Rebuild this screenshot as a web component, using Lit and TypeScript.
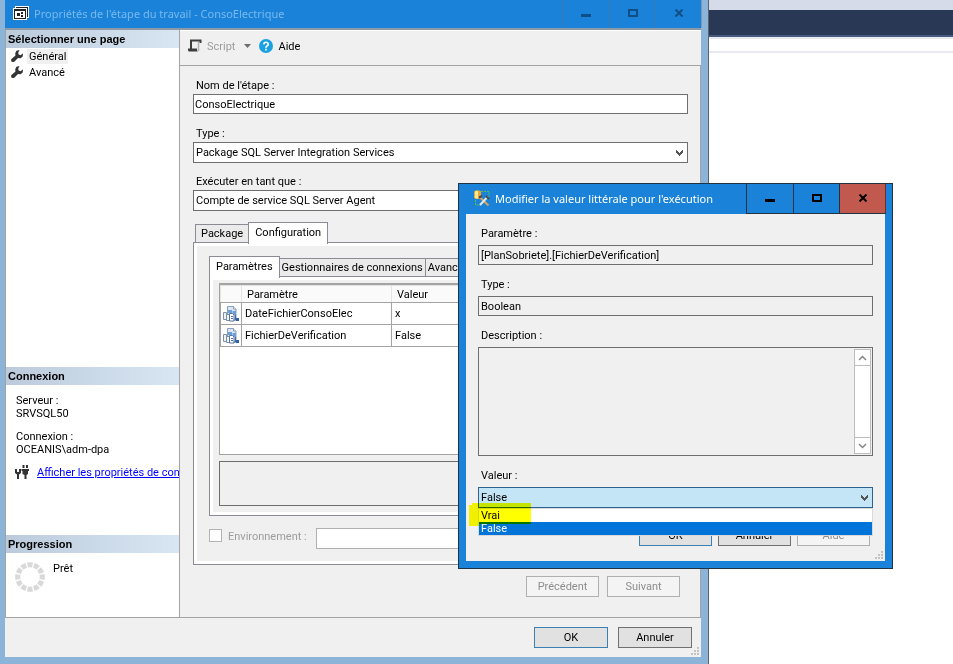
import { LitElement, html, css, svg } from "lit";
import { customElement, property } from "lit/decorators.js";
import { classMap } from "lit/directives/class-map.js";

const chevron = html`<svg class="chevron" width="7" height="6" viewBox="0 0 7 6" shape-rendering="crispEdges" aria-hidden="true">
  <path d="M0 0h1v1h1v1h1v1h1v-1h1v-1h1v-1h1v3h-1v1h-1v1h-1v1h-1v-1h-1v-1h-1v-1h-1z" fill="currentColor" /></svg>`;

const wrench = html`<svg width="12" height="12" viewBox="0 0 12 12" aria-hidden="true">
  <path d="M8.500 0 5.500.8 4.200 3.200l.3 2.200L.2 9.200V11.200L1.500 12H3l4-3.900 2.600.1 2.100-1.700L12 3.200 9.600 5.200 7.600 4.600l-.4-1.900z" fill="#333" /></svg>`;

const grip = html`<svg class="grip" width="8" height="8" viewBox="0 0 8 8" shape-rendering="crispEdges" aria-hidden="true">
  <path d="M6 0h2v2h-2zM3 3h2v2h-2zM6 3h2v2h-2zM0 6h2v2h-2zM3 6h2v2h-2zM6 6h2v2h-2z" fill="#c3c3c3" /></svg>`;

const packageIcon = html`<svg width="16" height="16" viewBox="0 0 16 16" aria-hidden="true">
  <path d="M4.500.5h6l2.500 2.500v9h-8.500z" fill="#dbe6f2" stroke="#8aa0bd" />
  <path d="M10.500.5v2.500h2.500" fill="#fff" stroke="#8aa0bd" />
  <path d="M5 4h4v3h-4zM9.500 5h3.500v4h-3.500z" fill="#6c9fd6" />
  <path d="M.5 6.500h3v7h-3zM3.500 8.500h3v6h-3z" fill="#eef3f9" stroke="#7e8fa8" />
  <path d="M6.500 7.500h3l1.500 1.500v6h-4.500z" fill="#fff" stroke="#5e7596" />
  <path d="M8 10.500h2M8 12.500h2" stroke="#4c79b2" />
  <path d="M12.500 9v5M10.500 14h4.500" stroke="#456a9e" />
  <path d="M13 12h3v3h-3z" fill="#2e66ad" /></svg>`;

const ringSegments = Array.from({ length: 12 }, (_, i) => i * 30);

@customElement("window-controls")
export class WindowControls extends LitElement {
  @property({ type: Boolean, reflect: true }) active = false;

  static styles = css`
    :host { display: flex; flex: none; align-self: stretch; color: #0f4f86; margin-right: -1px; }
    :host([active]) { color: #000; }
    .control {
      box-sizing: border-box; display: grid; place-items: center; width: 47px; margin: 0; padding: 0 0 2px;
      border: 0; border-left: 1px solid #3c79b0; background: none; color: inherit;
    }
    .control:nth-child(2) { width: 46px; }
    .control:last-child { border-right: 1px solid #7c98b4; }
    :host([active]) .control { border: 1px solid #22333f; border-width: 0 0 1px 1px; }
    :host([active]) .close { background: #c2594f; border-right: 1px solid #6b2f2c; }
    svg { display: block; }
  `;

  render() {
    return html`
      <button class="control" aria-label="Réduire">
        <svg width="10" height="8" viewBox="0 0 10 8" shape-rendering="crispEdges"><path d="M0 5h10v3h-10z" fill="currentColor" /></svg>
      </button>
      <button class="control" aria-label="Agrandir">
        <svg width="10" height="8" viewBox="0 0 10 8" shape-rendering="crispEdges"><path d="M1 1h8v6h-8z" fill="none" stroke="currentColor" stroke-width="2" /></svg>
      </button>
      <button class="control close" aria-label="Fermer">
        <svg width="10" height="8" viewBox="0 0 10 8"><path d="M1.500.5 8.500 7.500M8.500.5 1.500 7.500" fill="none" stroke="currentColor" stroke-width="2" /></svg>
      </button>
    `;
  }
}

@customElement("app-root")
export class AppRoot extends LitElement {
  static styles = css`
    * { box-sizing: border-box; }
    :host {
      display: flex; position: relative; min-height: 100vh; overflow: hidden;
      font: 11px/13px Roboto, "Liberation Sans", Arial, sans-serif; color: #000; background: #fff;
    }
    button, input, select, textarea { font: inherit; color: inherit; margin: 0; border-radius: 0; }
    svg { display: block; flex: none; }

    .window {
      flex: 1; min-width: 0; display: flex; flex-direction: column;
      background: #f0f0f0; border: solid #8cb4d8; border-width: 0 7px 7px 5px;
    }
    .edge { width: 1px; background: #5c6370; }
    .backdrop { width: 244px; }
    .stripe-top { height: 10px; background: #d6dbe9; }
    .stripe-menu { height: 27px; background: #293955; border-bottom: 2px solid #465a7d; }
    .stripe-bar { height: 16px; border: solid #e9e9f1; border-width: 2px 0; }

    .titlebar {
      display: flex; align-items: center; height: 30px; background: #1a83d9; color: #79b9ee;
      font: 11px/16px "Noto Sans", "Open Sans", sans-serif; border-bottom: 2px solid #8d9aa6;
    }
    .titlebar .name { flex: 1; margin: 0; padding: 0 0 0 5px; font: inherit; white-space: nowrap; overflow: hidden; }
    .app-icon { margin: 0 0 2px 8px; }

    .body { flex: 1; display: flex; min-height: 0; border-bottom: 1px solid #a3a3a3; }
    .sidebar {
      width: 175px; flex: none; display: flex; flex-direction: column; background: #fff;
      border: solid #a3a3a3; border-width: 0 1px; overflow: hidden;
    }
    .heading {
      margin: 0; padding: 0 2px; height: 18px; font: bold 11px/18px "Liberation Sans", Arial, sans-serif;
      background: linear-gradient(90deg, #bccbdc, #d8e6f3);
    }
    .pages { flex: 1; }
    .page-list { list-style: none; margin: 0; padding: 0; }
    .page { display: flex; align-items: center; gap: 4px; height: 16px; padding: 0 5px; }
    .page-name { padding: 0 2px; line-height: 15px; }
    .page-name.current { background: #f0f0f0; }
    .connection { height: 168px; }
    .facts { margin: 0; padding: 9px 10px; }
    .facts dd { margin: 0 0 10px; }
    .facts dd:last-child { margin: 0; }
    .link-row { display: flex; align-items: center; gap: 8px; padding-left: 9px; white-space: nowrap; }
    .link-row a { color: #00f; }
    .progress { height: 82px; }
    .status { display: flex; gap: 8px; padding: 9px; }

    .main { flex: 1; min-width: 0; display: flex; flex-direction: column; border-top: 1px solid #fff; }
    .toolbar { display: flex; align-items: center; height: 35px; padding: 0 8px 4px; border-bottom: 1px solid #a3a3a3; }
    .tool { display: flex; align-items: center; gap: 5px; border: 0; padding: 0; background: none; }
    .tool:disabled { color: #9d9d9d; }
    .tool .caret { margin-left: 4px; }
    .tool + .tool { margin-left: 8px; }

    .pane {
      flex: 1; display: flex; flex-direction: column; padding: 13px 12px 20px 13px; border-right: 1px solid #a3a3a3;
    }
    .fields { display: grid; grid-auto-rows: 48px; }
    .field { display: flex; flex-direction: column; gap: 2px; }
    .field label { padding-left: 3px; }
    .text { height: 20px; width: 100%; padding: 0 1px; border: 1px solid #6e6e6e; background: #fff; outline: 0; }
    .select-box { display: grid; align-items: center; height: 21px; }
    .select-box > * { grid-area: 1 / 1; }
    .select-box select { appearance: none; width: 100%; height: 21px; padding: 0 2px; border: 1px solid #6e6e6e; background: #fff; }
    .chevron { justify-self: end; margin-right: 5px; color: #555; pointer-events: none; }

    .tabs { display: flex; align-items: flex-end; height: 21px; margin-bottom: -1px; position: relative; }
    .tab {
      height: 19px; padding: 0 5px; background: #ebebeb; border: 1px solid #8b8b95; border-left-width: 0; white-space: nowrap;
    }
    .tab:first-child { border-left-width: 1px; }
    .tab.selected { height: 22px; margin-bottom: -1px; padding: 0 6px 2px; background: #fff; border-bottom: 0; border-left-width: 1px; margin-left: -1px; }
    .tab.selected:first-child { margin-left: 0; }
    .outer-tabs { margin: -1px 0 -1px 2px; }
    .inner-tabs .tab { padding-inline: 2px; }
    .inner-tabs .tab.selected { padding-inline: 6px; }
    .panel {
      flex: 1; display: flex; flex-direction: column; border: 1px solid #8b8b95;
      box-shadow: inset 0 0 0 3px #fff;
    }
    .outer-panel { padding: 13px 15px 15px; }
    .inner-panel { padding: 6px 9px 9px; gap: 6px; }
    .grid-area { flex: 1; background: #fff; border: 1px solid #a3a3a3; border-top-width: 2px; }
    .grid { width: 100%; border-collapse: collapse; table-layout: fixed; }
    .grid th { height: 17px; padding: 0 5px; font-weight: normal; text-align: left; background: #fafafa; border: 1px solid #a3a3a3; border-color: #e3e3e3 #e3e3e3 #a3a3a3 #e3e3e3; }
    .grid td { height: 22px; padding: 0 3px; border: 1px solid #a3a3a3; }
    .grid .icon-cell { width: 21px; padding: 0 2px; }
    .grid .name-cell { width: 150px; }
    .details { height: 45px; border: 1px solid #6e6e6e; }
    .environment { display: flex; align-items: center; height: 21px; margin-top: 12px; color: #9d9d9d; }
    .environment input[type="checkbox"] { appearance: none; width: 13px; height: 13px; margin: 0 6px 6px 0; background: #fff; border: 1px solid #b4b4b4; }
    .environment label { width: 88px; padding-bottom: 4px; }
    .environment select { appearance: none; flex: 1; height: 21px; border: 1px solid #b0b0b0; background: #fff; opacity: 1; }

    .actions { display: flex; justify-content: flex-end; }
    .button { width: 73px; height: 21px; padding: 0; border: 1px solid #707070; background: #e1e1e1; }
    .button:disabled { color: #8d8d8d; background: #f4f4f4; border-color: #b0b0b0; }
    .button.default { border-color: #3c7fb1; }
    .wizard { gap: 8px; padding: 11px 8px 0 0; }
    .footer { height: 39px; align-items: flex-start; gap: 10px; padding: 9px 9px 0 0; position: relative; }
    .footer .button { width: 74px; }
    .grip { position: absolute; right: 2px; bottom: 2px; }

    .dialog {
      position: absolute; left: 458px; right: 60px; top: 183px; background: #f0f0f0;
      border: 1px solid #22333f; box-shadow: inset 0 0 0 7px #1a83d9; padding: 0 7px 7px;
    }
    .dialog .titlebar { color: #fff; border: 0; }
    .dialog-form { padding: 13px 12px 15px; display: flex; flex-direction: column; gap: 13px; position: relative; }
    .dialog .field { gap: 5px; }
    .dialog .text { background: #f0f0f0; padding: 0 2px; }
    .memo { display: flex; height: 109px; padding: 1px; border: 1px solid #6e6e6e; }
    .memo textarea { flex: 1; resize: none; border: 0; background: none; outline: 0; }
    .scroll { width: 17px; display: flex; flex-direction: column; background: #fff; border: 1px solid #bdbdbd; }
    .scroll button { display: grid; place-items: center; height: 16px; padding: 0; border: 0; background: #fff; color: #868686; }
    .scroll .up { border-bottom: 1px solid #bdbdbd; }
    .scroll .down { border-top: 1px solid #bdbdbd; margin-top: auto; }
    .combo { position: relative; }
    .dialog .select-box select { background: #c4e5f6; border-color: #2b628f; }
    .options {
      position: absolute; z-index: 1; top: 21px; left: 0; right: 0; list-style: none; margin: 0; padding: 0;
      background: #fff; border: 1px solid #d9d9d9;
    }
    .options li { height: 13px; padding: 0 2px; }
    .options li[aria-selected="true"] { background: #0074d9; color: #fff; }
    .marker { position: absolute; z-index: 2; left: -9px; top: 16px; mix-blend-mode: multiply; }
    .dialog .actions { gap: 6px; padding: 4px 3px 0 0; }
  `;

  private rows = [
    { name: "DateFichierConsoElec", value: "x" },
    { name: "FichierDeVerification", value: "False" },
  ];

  private select(id: string, value: string) {
    return html`<div class="select-box"><select id=${id}><option>${value}</option></select>${chevron}</div>`;
  }

  private tab(label: string, selected = false) {
    return html`<button role="tab" aria-selected=${selected ? "true" : "false"} class=${classMap({ tab: true, selected })}>${label}</button>`;
  }

  private renderSidebar() {
    return html`
      <aside class="sidebar">
        <section class="pages">
          <h2 class="heading">Sélectionner une page</h2>
          <ul class="page-list">
            <li class="page">${wrench}<span class="page-name current">Général</span></li>
            <li class="page">${wrench}<span class="page-name">Avancé</span></li>
          </ul>
        </section>
        <section class="connection">
          <h2 class="heading">Connexion</h2>
          <dl class="facts">
            <dt>Serveur :</dt><dd>SRVSQL50</dd>
            <dt>Connexion :</dt><dd>OCEANIS\\adm-dpa</dd>
          </dl>
          <div class="link-row">
            <svg width="14" height="14" viewBox="0 0 14 14" aria-hidden="true">
              <path d="M0 4h2v3h2v-3h2v4l-2 1.500v4.500h-2v-4.500L0 8zM7.500 0h2v3h-2zM11 0h2v3h-2zM6.500 4h7.500v2h-1v3l-1.500 1v4h-2v-4l-2-1v-3h-1z" fill="#333" />
            </svg>
            <a href="#">Afficher les propriétés de connexion</a>
          </div>
        </section>
        <section class="progress">
          <h2 class="heading">Progression</h2>
          <div class="status">
            <svg width="30" height="30" viewBox="-15 -15 30 30" aria-hidden="true">
              ${ringSegments.map((a) => svg`<path d="M-3 -14.500 A15 15 0 0 1 3 -14.500 L2 -9.500 A10 10 0 0 0 -2 -9.500Z" fill="#d9d9d9" transform="rotate(${a})" />`)}
            </svg>
            <span>Prêt</span>
          </div>
        </section>
      </aside>
    `;
  }

  private renderConfiguration() {
    return html`
      <div class="tabs outer-tabs" role="tablist">${this.tab("Package")}${this.tab("Configuration", true)}</div>
      <div class="panel outer-panel">
        <div class="tabs inner-tabs" role="tablist">
          ${this.tab("Paramètres", true)}${this.tab("Gestionnaires de connexions")}${this.tab("Avancé")}
        </div>
        <div class="panel inner-panel">
          <div class="grid-area">
            <table class="grid">
              <thead><tr><th class="icon-cell"></th><th class="name-cell">Paramètre</th><th>Valeur</th></tr></thead>
              <tbody>
                ${this.rows.map((r) => html`<tr><td class="icon-cell">${packageIcon}</td><td>${r.name}</td><td>${r.value}</td></tr>`)}
              </tbody>
            </table>
          </div>
          <div class="details"></div>
        </div>
        <div class="environment">
          <input type="checkbox" id="env" disabled />
          <label for="env">Environnement :</label>
          <select aria-label="Environnement" disabled></select>
        </div>
      </div>
    `;
  }

  private renderDialog() {
    return html`
      <section class="dialog" role="dialog" aria-labelledby="dialog-name">
        <header class="titlebar">
          <svg class="app-icon" width="16" height="16" viewBox="0 0 16 16" aria-hidden="true">
            <path d="M7 1.500h8v5M1.500 10v5h5" fill="none" stroke="#58c04a" stroke-dasharray="2 1" />
            <path d="M0 1.500Q3.500-.8 7 1.500V8Q3.500 10 0 8z" fill="#e9a92c" />
            <path d="M1 1.500Q3-.2 4 1.500V8.500Q2 8.800 1 8z" fill="#ffe9a0" />
            <path d="M6 7.500 14.500 15.500" stroke="#d8a35c" stroke-width="2" />
            <path d="M14 6.500 6 15" stroke="#e4e7ea" stroke-width="2" />
            <path d="M5 7.500 8 6M12 6l3 3" stroke="#4a4a4a" stroke-width="2" />
          </svg>
          <h2 class="name" id="dialog-name">Modifier la valeur littérale pour l'exécution</h2>
          <window-controls active></window-controls>
        </header>
        <div class="dialog-form">
          <div class="field"><label for="param">Paramètre :</label><input class="text" id="param" readonly .value=${"[PlanSobriete].[FichierDeVerification]"} /></div>
          <div class="field"><label for="kind">Type :</label><input class="text" id="kind" readonly .value=${"Boolean"} /></div>
          <div class="field">
            <label for="description">Description :</label>
            <div class="memo">
              <textarea id="description" readonly></textarea>
              <div class="scroll">
                <button class="up" aria-label="Monter"><svg width="9" height="6" viewBox="0 0 9 6"><path d="M1 5 4.500 1.500 8 5" fill="none" stroke="currentColor" stroke-width="1.500" /></svg></button>
                <button class="down" aria-label="Descendre"><svg width="9" height="6" viewBox="0 0 9 6"><path d="M1 1 4.500 4.500 8 1" fill="none" stroke="currentColor" stroke-width="1.500" /></svg></button>
              </div>
            </div>
          </div>
          <div class="field">
            <label for="value">Valeur :</label>
            <div class="combo">
              ${this.select("value", "False")}
              <ul class="options" role="listbox" aria-label="Valeur">
                <li role="option" aria-selected="false">Vrai</li>
                <li role="option" aria-selected="true">False</li>
              </ul>
              <svg class="marker" width="62" height="23" viewBox="0 0 62 23" aria-hidden="true">
                <path d="M3 0H62V21H10V23H0V2H3z" fill="#ff0" />
              </svg>
            </div>
          </div>
          <div class="actions">
            <button class="button default">OK</button>
            <button class="button">Annuler</button>
            <button class="button" disabled>Aide</button>
          </div>
          ${grip}
        </div>
      </section>
    `;
  }

  render() {
    return html`
      <main class="window">
        <header class="titlebar">
          <svg class="app-icon" width="16" height="14" viewBox="0 0 16 14" shape-rendering="crispEdges" aria-hidden="true">
            <path d="M2 0h14v12h-2v2h-14v-12h2z" fill="#fff" />
            <path d="M1 3h12v10h-12zM3 1h12v10h-1v-9h-11z" fill="#222" />
            <path d="M2 5h10v7h-10z" fill="#fff" />
            <path d="M4 7h3v3h-3zM8 6h2v2h-2zM8 9h2v2h-2z" fill="#222" />
          </svg>
          <h1 class="name">Propriétés de l'étape du travail - ConsoElectrique</h1>
          <window-controls></window-controls>
        </header>
        <div class="body">
          ${this.renderSidebar()}
          <div class="main">
            <div class="toolbar">
              <button class="tool" disabled>
                <svg width="14" height="14" viewBox="0 0 14 14" aria-hidden="true">
                  <path d="M3 10V1.500h9.500V4" fill="none" stroke="#3d3d3d" stroke-width="2" />
                  <path d="M0 9.500h9v1.500q0 1.500 1.500 1.500H1.500Q0 12.500 0 11z" fill="#3d3d3d" />
                  <path d="M10.500 3v9" stroke="#b2b2b2" stroke-width="1.500" />
                </svg>
                Script
                <svg class="caret" width="7" height="4" viewBox="0 0 7 4"><path d="M0 0h7L3.500 4z" fill="#6d6d6d" /></svg>
              </button>
              <button class="tool">
                <svg width="14" height="14" viewBox="0 0 14 14" aria-hidden="true">
                  <circle cx="7" cy="7" r="7" fill="#1ba1e2" />
                  <path d="M4.800 5.300Q5 3.300 7 3.300T9.200 5.200Q9.200 6.300 8 7T7 8.800M7 9.800v1.700" fill="none" stroke="#fff" stroke-width="1.600" />
                </svg>
                Aide
              </button>
            </div>
            <div class="pane">
              <div class="fields">
                <div class="field"><label for="step">Nom de l'étape :</label><input class="text" id="step" .value=${"ConsoElectrique"} /></div>
                <div class="field"><label for="type">Type :</label>${this.select("type", "Package SQL Server Integration Services")}</div>
                <div class="field"><label for="run-as">Exécuter en tant que :</label>${this.select("run-as", "Compte de service SQL Server Agent")}</div>
              </div>
              ${this.renderConfiguration()}
              <div class="actions wizard">
                <button class="button" disabled>Précédent</button>
                <button class="button" disabled>Suivant</button>
              </div>
            </div>
          </div>
        </div>
        <footer class="actions footer">
          <button class="button default">OK</button>
          <button class="button">Annuler</button>
          ${grip}
        </footer>
      </main>
      <div class="edge"></div>
      <div class="backdrop">
        <div class="stripe-top"></div>
        <div class="stripe-menu"></div>
        <div class="stripe-bar"></div>
      </div>
      ${this.renderDialog()}
    `;
  }
}
